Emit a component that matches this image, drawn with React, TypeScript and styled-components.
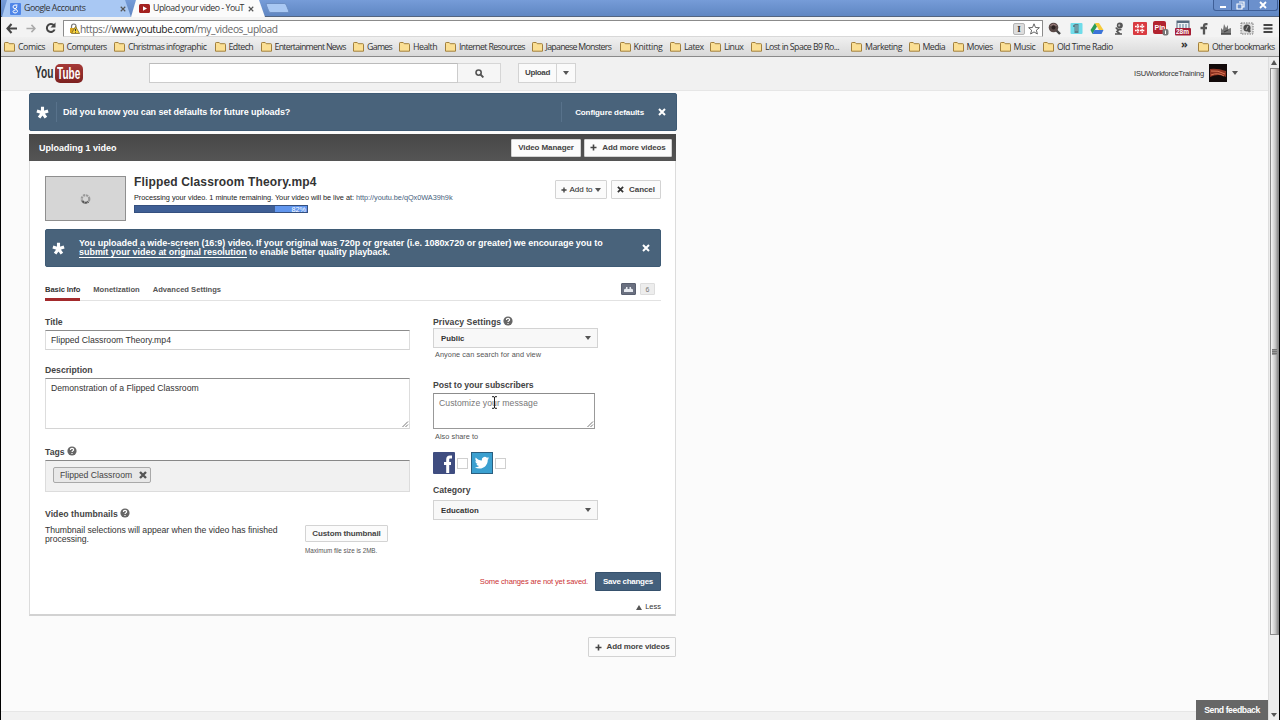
import React from 'react';
import styled, { createGlobalStyle, css } from 'styled-components';

const GlobalStyle = createGlobalStyle`
  * { box-sizing: border-box; }
  html, body { margin: 0; padding: 0; }
  body {
    width: 1280px; height: 720px; overflow: hidden;
    font-family: "Liberation Sans", Arial, sans-serif;
    font-size: 8.67px; color: #444; background: #000;
  }
  svg { display: block; flex: none; }
`;

const Window = styled.div`
  position: relative;
  width: 1280px; height: 720px; overflow: hidden;
  display: flex; flex-direction: column;
  border: 0 solid #000; border-width: 0 1px;
  background: #fbfbfb;
`;

/* ---------- browser chrome ---------- */

const chromeFont = css`font-family: "Open Sans", "Noto Sans", sans-serif; color: #333;`;

const TabStrip = styled.div`
  flex: none; height: 17px; padding-left: 1px;
  display: flex; align-items: flex-start;
  background: linear-gradient(#769cd8, #5f86c2);
  border-bottom: 1px solid #53647f;
`;
const Tab = styled.div<{ $active?: boolean; $w: number }>`
  ${chromeFont}
  position: relative;
  flex: none; width: ${p => p.$w}px; height: 17px; padding: 0 ${p => (p.$active ? 11 : 5)}px 0 8px;
  display: flex; align-items: center; gap: 3px;
  font-size: 8.8px; white-space: nowrap;
  background: ${p => (p.$active ? '#fbfbfb' : '#a9c8f3')};
  clip-path: polygon(5px 0, calc(100% - 6px) 0, 100% 100%, 0 100%);
`;
const TabTitle = styled.span<{ $ls?: number }>`
  flex: 1; line-height: 15px;
  letter-spacing: ${p => p.$ls ?? 0}px;
`;
const NewTab = styled.div`
  width: 21px; height: 10px; margin: 3px 0 0 2px;
  background: #a9c8f3; border: 1px solid #6d8fc4; border-radius: 2px;
  transform: skewX(22deg);
`;
const WindowButtons = styled.div`
  margin-left: auto; margin-right: 1px; height: 11px; display: flex;
  border: 1px solid #3f5f97; border-top: 0; border-radius: 0 0 3px 3px;
  background: #6b90cc;
`;
const WindowButton = styled.div<{ $w: number }>`
  width: ${p => p.$w}px; display: flex; align-items: center; justify-content: center;
  & + & { border-left: 1px solid #3f5f97; }
`;

const Toolbar = styled.div`
  flex: none; height: 20px; padding: 3px 0 0 5px;
  display: flex; align-items: flex-start;
  background: #f3f3f3;
`;
const NavIcons = styled.div`
  width: 57px; height: 16px; display: flex; align-items: center; gap: 9px;
`;
const Omnibox = styled.div`
  ${chromeFont}
  flex: none; width: 980px; height: 17px; padding: 0 2px 0 5px;
  display: flex; align-items: center; gap: 3px;
  background: #fff; border: 1px solid #8b8b8b; border-bottom-color: #d8d8d8; border-radius: 1px;
`;
const Url = styled.span`
  flex: 1; margin-left: -3px; font-size: 10.2px; line-height: 14px; letter-spacing: -0.42px; color: #666;
  b { font-weight: 400; color: #222; }
`;
const InfoBadge = styled.span`
  width: 12px; height: 12px;
  font: bold 9px/11px "Liberation Serif", serif; text-align: center;
  background: #ddd; border: 1px solid #b5b5b5; border-radius: 2px; color: #333;
`;
const Extensions = styled.div`
  flex: 1; height: 16px; padding-left: 1px;
  display: grid; grid-template-columns: repeat(11, 1fr); align-items: center; justify-items: center;
`;

const BookmarkBar = styled.div`
  flex: none; height: 20px; padding: 0 3px 0 3px;
  display: flex; align-items: center;
  background: linear-gradient(#f0f0f0, #d9d9d9);
  border-bottom: 1px solid #8a8a8a;
`;
const Bookmark = styled.div<{ $w: number; $gap?: number }>`
  ${chromeFont}
  flex: none; width: ${p => p.$w}px;
  display: flex; align-items: center; gap: ${p => p.$gap ?? 3}px;
  font-size: 8.8px; line-height: 14px; white-space: nowrap;
`;
const BookmarkName = styled.span<{ $ls: number }>`letter-spacing: ${p => p.$ls}px;`;
const Overflow = styled.span`
  ${chromeFont}
  width: 27px; padding-bottom: 5px; font-size: 11px; font-weight: 700; line-height: 10px;
`;

/* ---------- page frame ---------- */

const Viewport = styled.div`flex: 1; min-height: 0; display: flex;`;
const Page = styled.div`
  flex: 1; position: relative; display: flex; flex-direction: column;
`;
const ScrollTrack = styled.div`
  flex: none; width: 11px; display: flex; flex-direction: column; align-items: center;
  background: #ececec; border-left: 1px solid #ddd;
`;
const ScrollArrow = styled.div<{ $end?: boolean }>`
  height: 11px; display: flex; align-items: center;
  margin-top: ${p => (p.$end ? 'auto' : 0)};
`;
const ScrollThumb = styled.div`
  width: 9px; height: 567px; display: flex; align-items: center; justify-content: center;
  background: linear-gradient(90deg, #f6f6f6, #c9c9c9 60%, #8b8b8b);
  border: 1px solid #8b8b8b;
`;
const ThumbGrip = styled.div`width: 5px; height: 6px; background: repeating-linear-gradient(#777 0 1px, #999 1px 2px);`;

const Header = styled.header`
  flex: none; height: 34px; padding: 6px 30px 0 34px;
  display: flex; align-items: flex-start;
  background: #f1f1f1; border-bottom: 1px solid #e6e6e6;
`;
const Logo = styled.div`
  width: 114px; height: 20px; display: flex; align-items: center; gap: 1px;
  font: bold 17px/20px "Liberation Sans", sans-serif; color: #333;
`;
const LogoYou = styled.span`
  display: block; width: 19px; transform-origin: left; transform: scaleX(0.6);
`;
const LogoTube = styled.span`
  display: flex; justify-content: center; width: 28px; height: 19px; border-radius: 5px; color: #fff;
  background: linear-gradient(#a63a38, #7d2120);
  span { display: block; transform: scaleX(0.59); line-height: 19px; }
`;
const SearchInput = styled.div`
  width: 309px; height: 20px; background: #fff; border: 1px solid #ccc; border-top-color: #bbb;
`;
const SearchButton = styled.div`
  width: 43px; height: 20px; display: flex; align-items: center; justify-content: center;
  background: #f6f6f6; border: 1px solid #d6d6d6; border-left: 0;
`;
const UploadButton = styled.div`
  margin-left: 17px; width: 58px; height: 20px; display: flex;
  background: #fafafa; border: 1px solid #d3d3d3;
`;
const UploadLabel = styled.span`
  width: 38px; line-height: 18px; text-align: center; font-weight: 700; font-size: 8px; letter-spacing: -0.35px;
  border-right: 1px solid #d3d3d3; color: #444;
`;
const CaretCell = styled.span`flex: 1; display: flex; align-items: center; justify-content: center;`;
const Account = styled.div`
  margin-left: auto; height: 20px; display: flex; align-items: center; gap: 5px;
  font-size: 7.5px; letter-spacing: -0.17px; color: #333;
`;
const Caret = styled.i<{ $up?: boolean }>`
  display: block; width: 0; height: 0;
  border: 3px solid transparent;
  ${p => (p.$up
    ? css`border-bottom: 5px solid #555; border-top: 0;`
    : css`border-top: 4px solid #555; border-bottom: 0;`)}
`;

const Main = styled.main`
  flex: 1; width: 648px; margin-left: 28px; padding-top: 2px;
  display: flex; flex-direction: column;
`;

/* ---------- notices ---------- */

const Notice = styled.div<{ $w: number }>`
  flex: none; width: ${p => p.$w}px; height: 38px; padding: 0 10px 0 6px;
  display: flex; align-items: center;
  background: #49637b; border: 1px solid #3f5b75; border-radius: 2px;
  color: #fff; font-weight: 700;
`;
const NoticeIcon = styled.span<{ $divider?: boolean }>`
  height: 20px; padding-right: 7px; display: flex; align-items: center;
  border-right: 1px solid ${p => (p.$divider ? '#58728b' : 'transparent')};
`;
const NoticeText = styled.p<{ $ls: number; $gap: number }>`
  flex: 1; margin: 0; padding-left: ${p => p.$gap}px;
  font-size: 9px; line-height: 9px; letter-spacing: ${p => p.$ls}px; white-space: nowrap;
  u { text-decoration: none; border-bottom: 1px solid #fff; }
`;
const NoticeAction = styled.span`
  height: 20px; padding: 0 14px 0 13px; line-height: 21px;
  border-left: 1px solid #58728b; font-size: 8px; letter-spacing: -0.1px;
`;

/* ---------- card ---------- */

const UploadBar = styled.div`
  flex: none; width: 647px; height: 27px; margin-top: 3px; padding: 0 4px 0 10px;
  display: flex; align-items: center; gap: 3px;
  background: linear-gradient(#474747, #555);
  color: #fff;
`;
const BarTitle = styled.h2`
  flex: 1; margin: 0; font-size: 9px; letter-spacing: 0; line-height: 12px;
`;
const Button = styled.button<{ $w: number; $h?: number; $ls?: number; $primary?: boolean; $plain?: boolean }>`
  flex: none; width: ${p => p.$w}px; height: ${p => p.$h ?? 19}px; padding: 0;
  display: flex; align-items: center; justify-content: center; gap: ${p => (p.$plain ? 2 : 5)}px;
  font: ${p => (p.$plain ? 400 : 700)} 8px/12px "Liberation Sans", Arial, sans-serif; letter-spacing: ${p => p.$ls ?? 0}px;
  white-space: nowrap;
  color: ${p => (p.$primary ? '#fff' : p.$plain ? '#222' : '#444')};
  background: ${p => (p.$primary ? '#44607c' : '#fbfbfb')};
  border: 1px solid ${p => (p.$primary ? '#36516d' : '#d3d3d3')};
  border-radius: 1px;
`;
const Card = styled.section`
  flex: none; width: 647px; height: 455px; padding: 15px 14px 0 15px;
  background: #fff; border: 1px solid #dcdcdc; border-top: 0; border-bottom: 2px solid #d2d2d2;
`;
const VideoHead = styled.div`height: 53px; display: flex;`;
const Thumb = styled.div`
  width: 81px; height: 45px; display: flex; align-items: center; justify-content: center;
  background: #d6d6d6; border: 1px solid #8f8f8f;
`;
const VideoInfo = styled.div`flex: 1; padding-left: 8px; white-space: nowrap;`;
const VideoTitle = styled.h1`
  margin: 0; font-size: 12px; line-height: 13px; letter-spacing: 0.15px; color: #333;
`;
const Status = styled.div`
  margin-top: 4px; font-size: 7.33px; line-height: 9px; letter-spacing: -0.035px; color: #222;
  a { color: #46617d; }
`;
const Progress = styled.div`
  margin-top: 3px; width: 174px; height: 8px; display: flex; justify-content: flex-end;
  background: #3f5f95; border: 1px solid #35507f;
`;
const ProgressHead = styled.div`
  width: 32px; padding-right: 1px; text-align: right;
  background: #6196ee; color: #fff; font-size: 7.3px; line-height: 7px;
`;
const VideoActions = styled.div`display: flex; gap: 4px; padding-top: 4px;`;

const Tabs = styled.nav`
  height: 34px; padding-top: 10px; display: flex; gap: 13px;
  border-bottom: 1px solid #e2e2e2;
`;
const TabLink = styled.span<{ $active?: boolean; $ls: number }>`
  height: 24px; padding-top: 7px; line-height: 12px;
  font-size: 7.6px; font-weight: 700; letter-spacing: ${p => p.$ls}px; white-space: nowrap;
  color: ${p => (p.$active ? '#333' : '#555')};
  border-bottom: ${p => (p.$active ? '3px solid #a32a2c' : '0')};
`;
const Counters = styled.div`margin-left: auto; padding: 6px 6px 0 0; display: flex; gap: 4px;`;
const Counter = styled.span<{ $dark?: boolean }>`
  width: 15px; height: 12px; display: flex; align-items: center; justify-content: center;
  font-size: 7px; color: #777; border-radius: 1px;
  background: ${p => (p.$dark ? '#6a7080' : '#ededed')};
  border: 1px solid ${p => (p.$dark ? '#5a6070' : '#ddd')};
`;

const Columns = styled.div`height: 252px; display: flex; gap: 23px;`;
const Column = styled.div<{ $w: number }>`
  flex: none; width: ${p => p.$w}px; display: flex; flex-direction: column;
`;
const Label = styled.div<{ $mt: number; $ls?: number }>`
  flex: none; height: 12px; margin-top: ${p => p.$mt}px;
  display: flex; align-items: center; gap: 2px;
  font-size: 8.67px; font-weight: 700; line-height: 12px; letter-spacing: ${p => p.$ls ?? 0}px; color: #444;
  svg { margin-top: -2px; }
`;
const Field = styled.div<{ $h: number; $w?: number; $mt: number; $muted?: boolean; $ls?: number; $dark?: boolean }>`
  position: relative; flex: none;
  width: ${p => (p.$w ? p.$w + 'px' : '100%')}; height: ${p => p.$h}px; margin-top: ${p => p.$mt}px;
  padding: 3px 5px; background: #fff;
  border: 1px solid ${p => (p.$dark ? '#999' : '#ddd')};
  border-top-color: #8c8c8c; border-bottom-color: ${p => (p.$dark ? '#999' : '#d4d4d4')};
  font-size: 8.67px; line-height: 12px; letter-spacing: ${p => p.$ls ?? 0}px;
  color: ${p => (p.$muted ? '#777' : '#333')};
`;
const Grip = styled.svg`position: absolute; right: 0; bottom: 0;`;
const TagBox = styled.div`
  flex: none; height: 32px; margin-top: 2px; padding: 6px 7px;
  background: #f1f1f1; border: 1px solid #dcdcdc; border-top-color: #888;
`;
const Tag = styled.div`
  width: 98px; height: 16px; padding: 0 3px 0 6px;
  display: flex; align-items: center; justify-content: space-between;
  background: #e8e8e8; border: 1px solid #a9a9a9; border-radius: 2px;
  font-size: 8.67px; color: #444; white-space: nowrap; letter-spacing: 0;
`;
const ThumbRow = styled.div`margin-top: 5px; display: flex; justify-content: space-between; padding-right: 22px;`;
const ThumbText = styled.p`
  margin: 1px 0 0; width: 245px; font-size: 8.67px; line-height: 8.5px; letter-spacing: -0.03px; color: #333; white-space: nowrap;
`;
const Hint = styled.div<{ $mt: number; $ls: number; $size?: number; $pl?: number }>`
  margin-top: ${p => p.$mt}px; padding-left: ${p => p.$pl ?? 0}px; height: 10px; line-height: 10px;
  font-size: ${p => p.$size ?? 7.33}px; letter-spacing: ${p => p.$ls}px; color: #555; white-space: nowrap;
`;
const Select = styled.div<{ $ls?: number; $mt: number }>`
  flex: none; width: 165px; height: 20px; margin-top: ${p => p.$mt}px; padding: 0 6px 0 7px;
  display: flex; align-items: center; justify-content: space-between;
  background: #f8f8f8; border: 1px solid #d3d3d3;
  font-size: 7.8px; font-weight: 700; letter-spacing: ${p => p.$ls ?? 0}px; color: #333;
`;
const ShareRow = styled.div`flex: none; margin-top: 10px; height: 22px; display: flex; align-items: center;`;
const CheckBox = styled.span<{ $mr?: number }>`
  width: 11px; height: 11px; margin: 0 ${p => p.$mr ?? 0}px 0 2px; background: #fff; border: 1px solid #cfcfcf;
`;
const SaveRow = styled.div`height: 30px; margin-top: 19px; display: flex; justify-content: flex-end; align-items: flex-start; gap: 7px;`;
const Unsaved = styled.span`line-height: 19px; font-size: 7.6px; letter-spacing: -0.16px; color: #cc3333;`;
const LessRow = styled.div`
  display: flex; justify-content: flex-end; align-items: center; gap: 3px;
  font-size: 7.5px; font-weight: 400; line-height: 10px; color: #333;
`;
const BottomActions = styled.div`width: 647px; padding-top: 21px; display: flex; justify-content: flex-end;`;
const PageFooter = styled.div`flex: none; height: 9px; background: #f1f1f1; border-top: 1px solid #e6e6e6;`;
const Feedback = styled.div`
  position: absolute; right: 0; bottom: 0; width: 72px; height: 20px;
  background: #666; color: #fff; text-align: center;
  font-size: 8.67px; font-weight: 700; line-height: 21px; letter-spacing: -0.42px;
`;
const TextCursor = styled.svg`position: absolute; left: 57px; top: 2px;`;

/* ---------- icons ---------- */

const Cross = ({ size = 7, color = '#fff', w = 2 }: { size?: number; color?: string; w?: number }) => (
  <svg width={size} height={size} viewBox="0 0 8 8"><path d="M1 1L7 7M7 1L1 7" stroke={color} strokeWidth={w} /></svg>
);
const Plus = ({ size = 7 }: { size?: number }) => (
  <svg width={size} height={size} viewBox="0 0 7 7"><path d="M3.5 .5v6M.5 3.5h6" stroke="#444" strokeWidth="1.6" /></svg>
);
const Star = () => (
  <svg width="13" height="13" viewBox="0 0 13 13">
    <path d="M6.5 6.8V.8M6.5 6.8L.9 5M6.5 6.8L12.1 5M6.5 6.8L3.1 11.6M6.5 6.8L9.9 11.6" stroke="#fff" strokeWidth="3.1" />
  </svg>
);
const Help = () => (
  <svg width="10" height="10" viewBox="0 0 10 10">
    <circle cx="5" cy="5" r="4.6" fill="#666" />
    <path d="M3.4 4C3.4 1.9 6.7 1.9 6.6 3.9C6.5 4.9 5 4.9 5 6.1M5 6.9v1.2" fill="none" stroke="#fff" strokeWidth="1.2" />
  </svg>
);
const Folder = () => (
  <svg width="11" height="10" viewBox="0 0 11 10">
    <path d="M.5 9.2V1.2q0-.7.7-.7h3l1 1.2h4.6q.7 0 .7.7v6.8z" fill="#fbdf94" stroke="#a2803d" />
  </svg>
);
const Handle = () => (
  <Grip width="8" height="8" viewBox="0 0 8 8"><path d="M1.5 7L7 1.5M4.5 7L7 4.5" stroke="#777" /></Grip>
);
const Spinner = () => (
  <svg width="12" height="12" viewBox="0 0 12 12">
    <circle cx="5.500" cy="6" r="3.8" fill="none" stroke="#999" strokeWidth="2.2" strokeDasharray="2.2 .8" />
    <path d="M2.500 8.2A3.8 3.8 0 0 0 8.300 8.5" fill="none" stroke="#555" strokeWidth="2" strokeDasharray="2 .7" />
  </svg>
);

const ExtensionIcons = () => (
  <>
    <svg width="13" height="13" viewBox="0 0 13 13">
      <path d="M8 8l4 4" stroke="#444" strokeWidth="2.4" /><circle cx="5.5" cy="5.5" r="4.8" fill="#5a4a48" /><circle cx="5.5" cy="5.5" r="2" fill="#2b2020" />
      <path d="M2.5 3.5Q5.5 1 8.5 3.5" fill="none" stroke="#a88" />
    </svg>
    <svg width="13" height="13" viewBox="0 0 13 13">
      <rect x=".5" y="1" width="12" height="11" rx="1" fill="#6fdcea" /><path d="M3 3.500L5 2H8.500V11H4.500V5H3z" fill="#5a7f88" /><path d="M5 4h3M5 6h3M5 8h3" stroke="#8fc6d0" strokeWidth=".8" />
    </svg>
    <svg width="14" height="13" viewBox="0 0 14 13">
      <path d="M5 1L.5 8l2 4L7 4.6z" fill="#2a9b57" /><path d="M5 1h4l4.5 7H9z" fill="#f6cb3c" /><path d="M4.5 8h9l-2 4h-9z" fill="#3b74d8" />
    </svg>
    <svg width="12" height="13" viewBox="0 0 12 13">
      <circle cx="6.800" cy="3.600" r="3" fill="#555" /><circle cx="6.200" cy="3.400" r="1.100" fill="#bbb" />
      <path d="M3 5.500Q4 8 8.500 7.500M6 7.500L4 9.500L7 12M2 12h7" fill="none" stroke="#555" strokeWidth="1.700" />
    </svg>
    <svg width="14" height="13" viewBox="0 0 14 13">
      <rect width="14" height="13" rx="1" fill="#d93b41" />
      <path d="M2 4.500h10M2 8.500h10M4.800 2v9M9.200 2v9" stroke="#fff" strokeWidth="1.300" strokeDasharray="1.800 .7" />
    </svg>
    <svg width="16" height="15" viewBox="0 0 16 15">
      <rect width="13" height="13" rx="2" fill="#b2232f" /><text x="1.500" y="8.800" fill="#fff" fontSize="7" fontWeight="700" fontFamily="Liberation Sans">Pin</text>
      <rect x="9.500" y="8" width="6" height="6.500" rx="2" fill="#777" /><path d="M12.500 9.500v3.500" stroke="#fff" />
    </svg>
    <svg width="16" height="16" viewBox="0 0 16 16">
      <rect x="2" y="1" width="12" height="8" fill="#eef2f5" stroke="#56697c" /><path d="M2 2h12" stroke="#56697c" strokeWidth="2" /><path d="M5 4v4M8 4v4M11 4v4" stroke="#5a7d95" />
      <rect y="8" width="16" height="7.500" rx="1" fill="#a51d35" /><text x="1" y="14.300" fill="#fff" fontSize="6.500" fontWeight="700" fontFamily="Liberation Sans">28m</text>
    </svg>
    <svg width="10" height="13" viewBox="0 0 10 13"><path d="M8.500 2.200H7Q5 2.200 5 4.500V12.500M1.500 6h6.500" fill="none" stroke="#555" strokeWidth="2.300" /></svg>
    <svg width="12" height="13" viewBox="0 0 12 13">
      <path d="M1 12V6l2 2 1-6 2 4 2-3 0 4 3-1v6z" fill="#777" /><path d="M1 12h10M4 10l4-2" stroke="#444" strokeWidth="1.300" />
    </svg>
    <svg width="14" height="13" viewBox="0 0 14 13">
      <rect x="1" y="1" width="12" height="11" fill="#ddd" stroke="#777" strokeDasharray="1.500 1" /><circle cx="7" cy="6" r="3.600" fill="#4a4a4a" /><path d="M7 6L10 10" stroke="#4a4a4a" strokeWidth="2.500" /><path d="M6 8L8 4" stroke="#ccc" strokeWidth=".8" />
    </svg>
    <svg width="10" height="13" viewBox="0 0 10 13"><path d="M.5 3h9M.5 6.500h9M.5 10h9" stroke="#444" strokeWidth="2" /></svg>
  </>
);

const bookmarks: [string, number, number][] = [
  ['Comics', 48.5, -0.45], ['Computers', 61.5, -0.6], ['Christmas infographic', 100.5, -0.55],
  ['Edtech', 46, -0.55], ['Entertainment News', 92.5, -0.72], ['Games', 46, -0.7], ['Health', 46, -0.5],
  ['Internet Resources', 86.5, -0.65], ['Japanese Monsters', 88, -0.72], ['Knitting', 50.5, -0.35],
  ['Latex', 40, -0.5], ['Linux', 41, -0.6], ['Lost in Space B9 Ro...', 100, -0.57],
  ['Marketing', 57.5, -0.5], ['Media', 44, -0.55], ['Movies', 47, -0.45], ['Music', 43.5, -0.4], ['Old Time Radio', 138, -0.47],
];

export default function App() {
  return (
    <Window>
      <GlobalStyle />
      <TabStrip>
        <Tab $w={129}>
          <svg width="11" height="12" viewBox="0 0 11 12"><rect width="11" height="12" rx="1" fill="#4f86e8" /><path d="M7.500 2H5Q3 2.200 3 4Q3.200 5.600 5 5.600Q7 5.400 6.800 3.700L6 2.200M5 5.600Q7.500 6.800 7.500 8.500Q7 10 5 10Q2.800 9.800 3 8.200Q3.500 7 5.500 7" fill="none" stroke="#fff" /></svg>
          <TabTitle $ls={-0.48}>Google Accounts</TabTitle>
          <Cross size={6} color="#555" w={1.5} />
        </Tab>
        <Tab $w={134} $active>
          <svg width="11" height="9" viewBox="0 0 11 9"><rect width="11" height="9" rx="1.500" fill="#a3211f" /><path d="M4 2.300L8 4.500L4 6.700z" fill="#fff" /></svg>
          <TabTitle $ls={-0.5}>Upload your video - YouT</TabTitle>
          <Cross size={6} color="#555" w={1.5} />
        </Tab>
        <NewTab />
        <WindowButtons>
          <WindowButton $w={17}><svg width="8" height="8" viewBox="0 0 8 8"><path d="M1 6h6" stroke="#fff" strokeWidth="2" /></svg></WindowButton>
          <WindowButton $w={17}><svg width="9" height="9" viewBox="0 0 9 9"><path d="M3 1h5v5H6M1 3h5v5H1z" fill="none" stroke="#fff" strokeWidth="1.200" /></svg></WindowButton>
          <WindowButton $w={29}><Cross size={8} w={1.8} /></WindowButton>
        </WindowButtons>
      </TabStrip>
      <Toolbar>
        <NavIcons>
          <svg width="11" height="11" viewBox="0 0 11 11"><path d="M5.500 1L1.500 5.500L5.500 10M2 5.500h9" fill="none" stroke="#444" strokeWidth="2.100" /></svg>
          <svg width="10" height="11" viewBox="0 0 11 11"><path d="M6 1.500L9.800 5.500L6 9.500M.5 5.500h9" fill="none" stroke="#aaa" strokeWidth="1.700" /></svg>
          <svg width="11" height="12" viewBox="0 0 11 12"><path d="M9 3.500A4 4 0 1 0 9.600 7.500" fill="none" stroke="#444" strokeWidth="2" /><path d="M10.500 .5v5h-5z" fill="#444" /></svg>
        </NavIcons>
        <Omnibox>
          <svg width="11" height="11" viewBox="0 0 11 11">
            <path d="M2.500 5V3.500Q2.500 1 4.800 1T7 3.500V5" fill="none" stroke="#777" strokeWidth="1.200" /><rect x="1" y="5" width="7" height="5" fill="#d8a520" />
            <path d="M6.500 3.500L10.600 10.500H2.500z" fill="#f6d33d" stroke="#6b5a20" strokeWidth=".7" /><path d="M6.500 5.800v2.200M6.500 8.800v.9" stroke="#333" />
          </svg>
          <Url>https://<b>www.youtube.com</b>/my_videos_upload</Url>
          <InfoBadge>I</InfoBadge>
          <svg width="12" height="12" viewBox="0 0 12 12"><path d="M6 .8L7.500 4.500L11.400 4.700L8.400 7.200L9.400 11L6 8.900L2.600 11L3.600 7.200L.6 4.700L4.500 4.500z" fill="#fff" stroke="#555" strokeWidth=".9" /></svg>
        </Omnibox>
        <Extensions><ExtensionIcons /></Extensions>
      </Toolbar>
      <BookmarkBar>
        {bookmarks.map(([name, w, ls]) => (
          <Bookmark key={name} $w={w}><Folder /><BookmarkName $ls={ls}>{name}</BookmarkName></Bookmark>
        ))}
        <Overflow>»</Overflow>
        <Bookmark $w={78}><Folder /><BookmarkName $ls={-0.65}>Other bookmarks</BookmarkName></Bookmark>
      </BookmarkBar>

      <Viewport>
        <Page>
          <Header>
            <Logo><LogoYou>You</LogoYou><LogoTube><span>Tube</span></LogoTube></Logo>
            <SearchInput />
            <SearchButton>
              <svg width="9" height="9" viewBox="0 0 9 9"><circle cx="3.600" cy="3.600" r="2.600" fill="none" stroke="#555" strokeWidth="1.600" /><path d="M5.500 5.500L8.400 8.400" stroke="#555" strokeWidth="1.900" /></svg>
            </SearchButton>
            <UploadButton><UploadLabel>Upload</UploadLabel><CaretCell><Caret /></CaretCell></UploadButton>
            <Account>
              ISUWorkforceTraining
              <svg width="18" height="18" viewBox="0 0 18 18"><rect width="18" height="18" fill="#120a0a" /><path d="M1 5Q8 4 17 7V13Q10 9 1 13z" fill="#8e3322" /><path d="M2 7Q9 6 16 10M2 11Q9 8 15 12" fill="none" stroke="#dc7856" /></svg>
              <Caret />
            </Account>
          </Header>

          <Main>
            <Notice $w={648}>
              <NoticeIcon $divider><Star /></NoticeIcon>
              <NoticeText $gap={6} $ls={-0.1}>Did you know you can set defaults for future uploads?</NoticeText>
              <NoticeAction>Configure defaults</NoticeAction>
              <Cross size={8} />
            </Notice>

            <UploadBar>
              <BarTitle>Uploading 1 video</BarTitle>
              <Button $w={70} $h={18} $ls={-0.08}>Video Manager</Button>
              <Button $w={88} $h={18} $ls={-0.1}><Plus />Add more videos</Button>
            </UploadBar>

            <Card>
              <VideoHead>
                <Thumb><Spinner /></Thumb>
                <VideoInfo>
                  <VideoTitle>Flipped Classroom Theory.mp4</VideoTitle>
                  <Status>Processing your video. 1 minute remaining. Your video will be live at: <a>http://youtu.be/qQx0WA39h9k</a></Status>
                  <Progress><ProgressHead>82%</ProgressHead></Progress>
                </VideoInfo>
                <VideoActions>
                  <Button $w={52} $plain><Plus size={6} />Add to<Caret /></Button>
                  <Button $w={50} $ls={-0.08}><Cross size={7} color="#333" />Cancel</Button>
                </VideoActions>
              </VideoHead>

              <Notice $w={616}>
                <NoticeIcon><Star /></NoticeIcon>
                <NoticeText $gap={6} $ls={-0.035}>
                  You uploaded a wide-screen (16:9) video. If your original was 720p or greater (i.e. 1080x720 or greater) we encourage you to<br />
                  <u>submit your video at original resolution</u> to enable better quality playback.
                </NoticeText>
                <Cross size={8} />
              </Notice>

              <Tabs>
                <TabLink $active $ls={-0.1}>Basic Info</TabLink>
                <TabLink $ls={0}>Monetization</TabLink>
                <TabLink $ls={0}>Advanced Settings</TabLink>
                <Counters>
                  <Counter $dark><svg width="11" height="8" viewBox="0 0 11 8"><path d="M1 7V4.500L3 3.500V2h1.500v2h2V2H8v1.500l2 1V7z" fill="#e6e9ef" /></svg></Counter>
                  <Counter>6</Counter>
                </Counters>
              </Tabs>

              <Columns>
                <Column $w={365}>
                  <Label $mt={15}>Title</Label>
                  <Field $h={20} $mt={2}>Flipped Classroom Theory.mp4</Field>
                  <Label $mt={14}>Description</Label>
                  <Field $h={51} $mt={2}>Demonstration of a Flipped Classroom<Handle /></Field>
                  <Label $mt={17}>Tags <Help /></Label>
                  <TagBox><Tag>Flipped Classroom <Cross size={8} color="#555" w={2.4} /></Tag></TagBox>
                  <Label $mt={16} $ls={0.05}>Video thumbnails <Help /></Label>
                  <ThumbRow>
                    <ThumbText>Thumbnail selections will appear when the video has finished<br />processing.</ThumbText>
                    <div>
                      <Button $w={83} $h={17} $ls={-0.12}>Custom thumbnail</Button>
                      <Hint $mt={4} $ls={-0.02} $size={6.3}>Maximum file size is 2MB.</Hint>
                    </div>
                  </ThumbRow>
                </Column>
                <Column $w={228}>
                  <Label $mt={15} $ls={0.05}>Privacy Settings <Help /></Label>
                  <Select $mt={0}>Public<Caret /></Select>
                  <Hint $mt={2} $ls={0.06} $pl={2}>Anyone can search for and view</Hint>
                  <Label $mt={19} $ls={-0.06}>Post to your subscribers</Label>
                  <Field $h={36} $w={162} $mt={2} $muted $dark $ls={0.05}>
                    Customize your message<Handle />
                    <TextCursor width="7" height="13" viewBox="0 0 7 13"><path d="M1 .7H3L3.500 1.200L4 .7H6M3.500 1v11M1 12.300H3L3.500 11.800L4 12.300H6" fill="none" stroke="#222" /></TextCursor>
                  </Field>
                  <Hint $mt={3} $ls={0.03} $pl={2}>Also share to</Hint>
                  <ShareRow>
                    <svg width="22" height="22" viewBox="0 0 22 22"><rect width="22" height="22" rx="1" fill="#3f4d80" /><path d="M19 5h-2q-2.300 0-2.300 2.600V21M11 11.500h7" fill="none" stroke="#fff" strokeWidth="3" /></svg>
                    <CheckBox $mr={3} />
                    <svg width="22" height="22" viewBox="0 0 22 22"><rect x=".5" y=".5" width="21" height="21" fill="#3ba0d0" stroke="#2a5f80" /><path transform="translate(3.800 3.500) scale(.6)" d="M23.950 4.570a10 10 0 0 1-2.820.77 4.960 4.960 0 0 0 2.160-2.720c-.95.55-2 .95-3.130 1.180a4.920 4.920 0 0 0-8.380 4.480C7.690 8.100 4.070 6.130 1.640 3.160a4.820 4.820 0 0 0-.67 2.480c0 1.710.87 3.210 2.190 4.100a4.900 4.900 0 0 1-2.230-.62v.06a4.920 4.920 0 0 0 3.950 4.830 5 5 0 0 1-2.210.08 4.940 4.940 0 0 0 4.600 3.420A9.870 9.870 0 0 1 0 19.540a13.990 13.990 0 0 0 7.560 2.210c9.050 0 14-7.500 14-13.980 0-.21 0-.42-.02-.63a9.940 9.940 0 0 0 2.410-2.570z" fill="#fff" /></svg>
                    <CheckBox />
                  </ShareRow>
                  <Label $mt={10}>Category</Label>
                  <Select $mt={4}>Education<Caret /></Select>
                </Column>
              </Columns>

              <SaveRow>
                <Unsaved>Some changes are not yet saved.</Unsaved>
                <Button $w={66} $primary $ls={-0.28}>Save changes</Button>
              </SaveRow>
              <LessRow><Caret $up />Less</LessRow>
            </Card>

            <BottomActions><Button $w={88} $h={20} $ls={-0.13}><Plus />Add more videos</Button></BottomActions>
          </Main>
          <PageFooter />
          <Feedback>Send feedback</Feedback>
        </Page>
        <ScrollTrack>
          <ScrollArrow><Caret $up /></ScrollArrow>
          <ScrollThumb><ThumbGrip /></ScrollThumb>
          <ScrollArrow $end><Caret /></ScrollArrow>
        </ScrollTrack>
      </Viewport>
    </Window>
  );
}
